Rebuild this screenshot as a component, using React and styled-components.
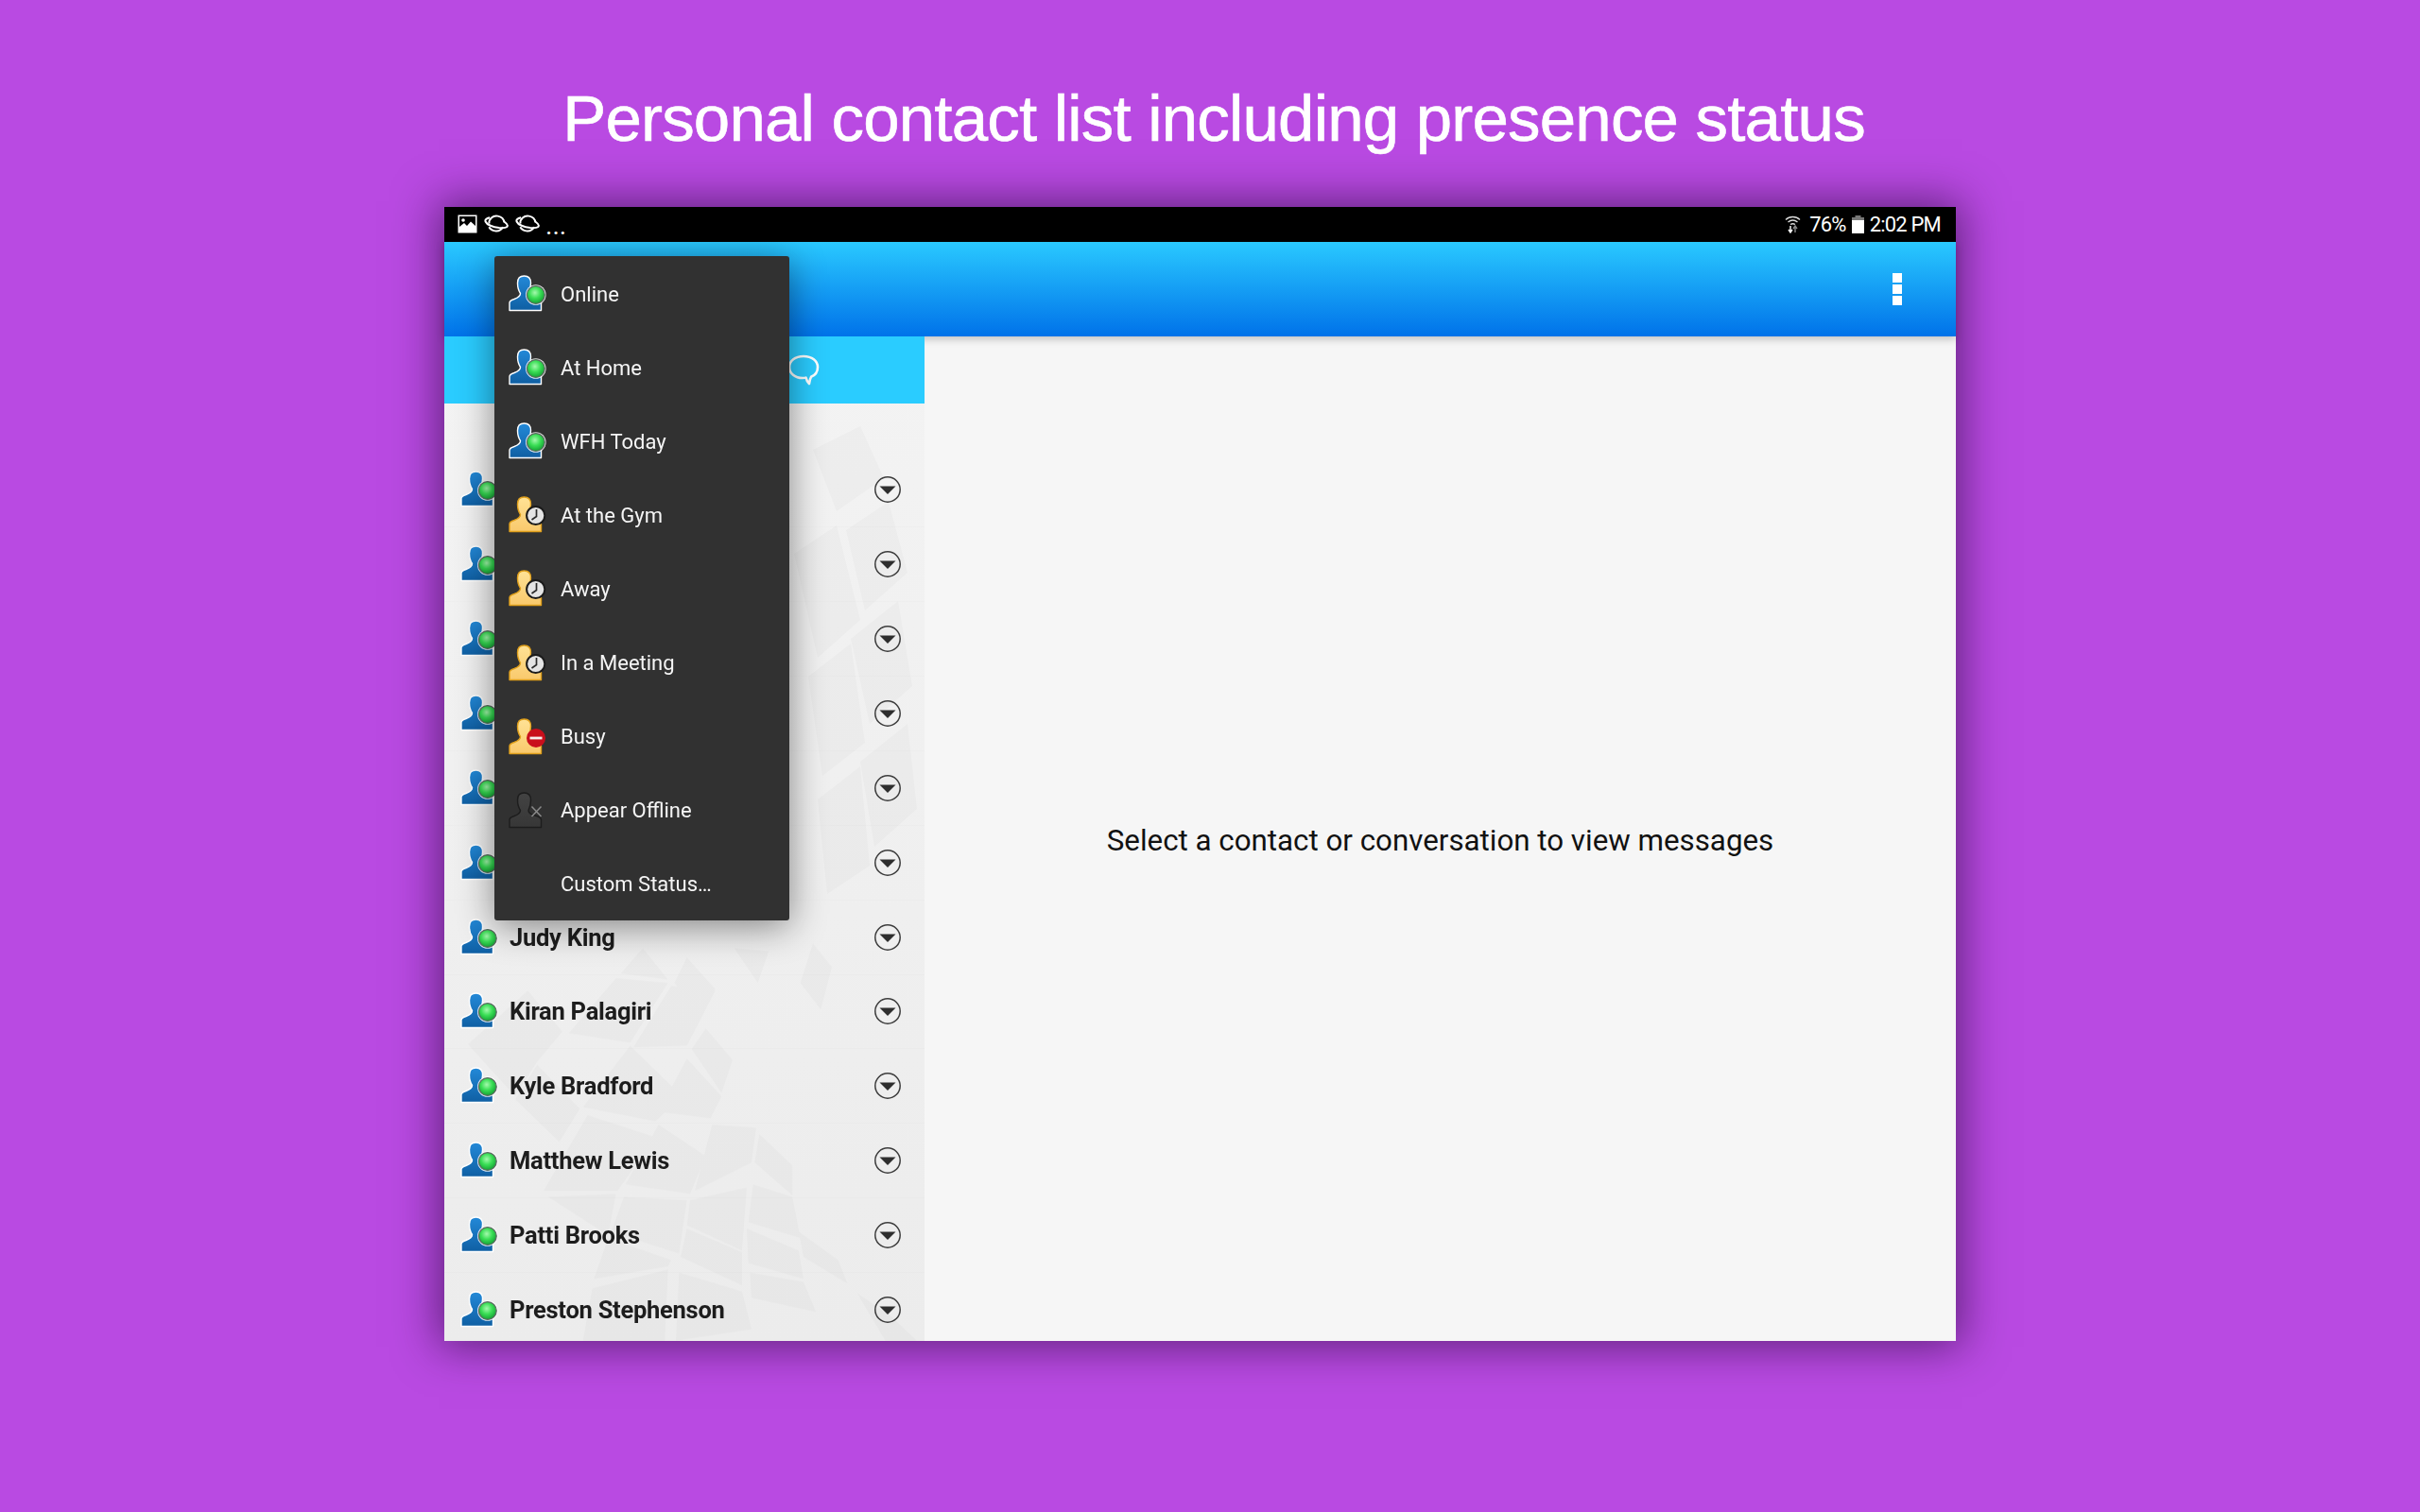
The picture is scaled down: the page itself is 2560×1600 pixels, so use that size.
import React from 'react'
import styled, { createGlobalStyle } from 'styled-components'

const GlobalStyle = createGlobalStyle`
  html, body { margin: 0; padding: 0; }
  body { background: #b94ae2; font-family: Roboto, "Liberation Sans", sans-serif; }
`

const Page = styled.div`
  width: 2560px;
  height: 1600px;
  overflow: hidden;
  background: #b94ae2;
`

const Title = styled.h1`
  height: 219px;
  margin: 0;
  padding: 89px 0 0 8px;
  box-sizing: border-box;
  text-align: center;
  color: #fff;
  font-family: "Liberation Sans", Arial, sans-serif;
  font-weight: 400;
  font-size: 69px;
  line-height: 74px;
  letter-spacing: -0.8px;
  -webkit-text-stroke: 0.6px #fff;
`

const Tablet = styled.div`
  position: relative;
  width: 1599px;
  height: 1200px;
  margin-left: 470px;
  display: flex;
  flex-direction: column;
  background: #f6f6f6;
  box-shadow: 0 0 44px 6px rgba(40, 10, 60, 0.62);
`

const StatusBar = styled.div`
  height: 37px;
  flex: none;
  box-sizing: border-box;
  padding: 0 16px 1px 14px;
  background: #000;
  color: #fff;
  display: flex;
  align-items: center;
  justify-content: space-between;
`

const StatusGroup = styled.div`
  display: flex;
  align-items: center;
  gap: ${p => p.$gap}px;
  font-size: 22px;
  letter-spacing: -0.8px;
`

const Dots = styled.span`
  margin: 3px 0 0 -1px;
  font-size: 28px;
  line-height: 28px;
  letter-spacing: 0;
`

const WifiSlot = styled.span`
  display: flex;
  margin-right: 3px;
`

const Header = styled.div`
  position: relative;
  z-index: 1;
  height: 100px;
  flex: none;
  display: flex;
  align-items: center;
  justify-content: flex-end;
  padding-right: 57px;
  background: linear-gradient(#2ac9ff, #0072e9);
  box-shadow: 0 3px 8px rgba(0, 0, 0, 0.22);
`

const Overflow = styled.div`
  display: flex;
  flex-direction: column;
  gap: 2px;
  span { width: 10px; height: 10px; background: #fff; }
`

const Body = styled.div`
  flex: 1;
  display: flex;
  min-height: 0;
`

const Sidebar = styled.div`
  position: relative;
  width: 508px;
  flex: none;
  display: flex;
  flex-direction: column;
  background: linear-gradient(#f3f3f3, #ececec);
  overflow: hidden;
`

const Tabs = styled.div`
  position: relative;
  z-index: 1;
  height: 71px;
  flex: none;
  display: flex;
  align-items: center;
  padding-left: 363px;
  background: #2accff;
`

const Backdrop = styled.svg`
  position: absolute;
  left: 0;
  top: 0;
`

const List = styled.div`
  position: relative;
  padding-top: 52.5px;
`

const Row = styled.div`
  height: 78.87px;
  box-sizing: border-box;
  display: flex;
  align-items: center;
  padding: 0 24.5px 0 17px;
  border-bottom: 1px solid rgba(0, 0, 0, 0.012);
`

const Name = styled.span`
  flex: 1;
  margin-left: 12px;
  font-size: 25.5px;
  font-weight: 700;
  letter-spacing: -0.26px;
  color: #1d1d1d;
`

const Pane = styled.div`
  flex: 1;
  display: flex;
  align-items: center;
  justify-content: center;
  padding-top: 4px;
  font-size: 31.3px;
  color: #111;
`

const Menu = styled.div`
  position: absolute;
  z-index: 2;
  left: 53px;
  top: 52px;
  width: 312px;
  height: 703px;
  background: #313131;
  border-radius: 3px;
  box-shadow: 0 6px 38px rgba(0, 0, 0, 0.46);
`

const MenuRow = styled.div`
  height: 78.1px;
  box-sizing: border-box;
  padding: 2px 0 0 15px;
  display: flex;
  align-items: center;
`

const MenuIconSlot = styled.div`
  width: 55px;
  height: 40px;
  flex: none;
`

const MenuLabel = styled.span`
  font-size: 22px;
  color: #f5f5f5;
`

const PALETTES = {
  blue: { top: '#2389d8', bottom: '#0f5fa3', line: '#fff' },
  yellow: { top: '#ffe295', bottom: '#f9c96c', line: '#e0a01c' },
  dark: { top: '#434343', bottom: '#373737', line: '#1d1d1d' },
}

function Person({ kind, id }) {
  const c = PALETTES[kind]
  return (
    <>
      <defs>
        <linearGradient id={id} x1="0" y1="0" x2="0" y2="1">
          <stop offset="0" stopColor={c.top} />
          <stop offset="1" stopColor={c.bottom} />
        </linearGradient>
      </defs>
      <path
        d="M1 37.5V29.5C1 27.5 3 26.5 6 25.5C10 24 12.5 22.5 12.5 19.5C10.5 16.5 9.5 13 9.5 8.5C9.5 3.5 12 1 16.5 1C21 1 23.5 3.5 23.5 8.5C23.5 13 22.5 16.5 21 19.5C21 22.5 24 24 28 25C32 26 34.5 27.5 34.5 29.5V37.5Z"
        fill={`url(#${id})`}
        stroke={c.line}
        strokeWidth="1.4"
        strokeLinejoin="round"
      />
    </>
  )
}

function GreenBadge({ id }) {
  return (
    <>
      <defs>
        <radialGradient id={id} cx="0.45" cy="0.38" r="0.62">
          <stop offset="0" stopColor="#a4f9ad" />
          <stop offset="0.5" stopColor="#3ade55" />
          <stop offset="1" stopColor="#14a034" />
        </radialGradient>
      </defs>
      <circle cx="28.8" cy="21" r="10.8" fill="#fff" opacity="0.85" />
      <circle cx="28.8" cy="21" r="9.4" fill={`url(#${id})`} stroke="#5e6a63" strokeWidth="1.3" />
    </>
  )
}

function ClockBadge() {
  return (
    <>
      <circle cx="28.7" cy="20.5" r="9.6" fill="#e4e4e4" stroke="#1b1b1b" strokeWidth="2" />
      <path d="M29.5 14V21.5L24.5 25" fill="none" stroke="#2a2a2a" strokeWidth="1.7" />
    </>
  )
}

function BusyBadge() {
  return (
    <>
      <circle cx="29" cy="21" r="10" fill="#c90f1c" />
      <rect x="22.5" y="19.6" width="13" height="2.8" fill="#f7eeee" />
    </>
  )
}

function StatusIcon({ status, id }) {
  return (
    <svg width="40" height="40" viewBox="0 0 40 40">
      {status === 'online' && (
        <>
          <Person kind="blue" id={`${id}-p`} />
          <GreenBadge id={`${id}-b`} />
        </>
      )}
      {status === 'away' && (
        <>
          <Person kind="yellow" id={`${id}-p`} />
          <ClockBadge />
        </>
      )}
      {status === 'busy' && (
        <>
          <Person kind="yellow" id={`${id}-p`} />
          <BusyBadge />
        </>
      )}
      {status === 'offline' && (
        <>
          <Person kind="dark" id={`${id}-p`} />
          <path d="M24.5 15.5L34.5 26M34.5 15.5L24.5 26" stroke="#8a8a8a" strokeWidth="1.5" />
        </>
      )}
    </svg>
  )
}

function Chevron() {
  return (
    <svg width="30" height="30" viewBox="0 0 30 30">
      <circle cx="15" cy="15" r="13.2" fill="none" stroke="#3c3c3c" strokeWidth="1.5" />
      <path d="M6.5 11.5H23.5L15 20Z" fill="#2e2e2e" />
    </svg>
  )
}

function Planet() {
  return (
    <svg width="26" height="22" viewBox="0 0 26 22" fill="none" stroke="#fff" strokeWidth="2">
      <g transform="rotate(10 13 11)">
        <path d="M5.5 12C4 7 8 2.5 13 2.5C17 2.5 20 4.5 21 8" />
        <path d="M20.5 13C19 17 16 18.5 13 18.5C10 18.5 7.5 17.5 6 15.5" />
        <path d="M5 5.5C1.5 7 0.3 8.8 1.3 10.5C3.3 13.5 10 15 16.5 14.5C21.5 14 25.5 12.8 25 10.6C24.7 9.6 23.5 8.3 21 7.3" />
      </g>
    </svg>
  )
}

function PictureIcon() {
  return (
    <svg width="21" height="20" viewBox="0 0 21 20">
      <rect x="0.5" y="0.5" width="20" height="19" fill="#fff" />
      <rect x="2" y="2" width="17" height="14" fill="#000" />
      <circle cx="6" cy="6" r="1.8" fill="#fff" />
      <path d="M2 16V13L7 9L10 12L14 7.5L19 12V16Z" fill="#fff" />
    </svg>
  )
}

function Wifi() {
  return (
    <svg width="17" height="20" viewBox="0 0 17 20" fill="none" stroke="#d8d8d8" strokeWidth="1.4">
      <path d="M1 5.5C5 1.5 12 1.5 16 5.5M3.5 8C6.5 5.5 10.5 5.5 13.5 8M6 10.5C7.5 9.5 9.5 9.5 11 10.5" />
      <path d="M6 12V18M4 16L6 19L8 16" stroke="#fff" />
      <path d="M11 19V13M9 15L11 12L13 15" stroke="#888" />
    </svg>
  )
}

function Battery() {
  return (
    <svg width="13" height="19" viewBox="0 0 13 19">
      <rect x="3.5" y="0" width="6" height="3" fill="#777" />
      <rect x="0" y="2" width="13" height="4" fill="#777" />
      <rect x="0" y="5" width="13" height="14" fill="#fff" />
    </svg>
  )
}

function Bubble() {
  return (
    <svg width="34" height="33" viewBox="0 0 34 33" fill="none" stroke="#fff" strokeWidth="2.6">
      <path d="M17 2C8 2 2 7 2 13.5C2 20 8 25 16 25C17.5 25 18.5 25 19.5 24.6C20 27 21 29 23 31C23.5 28 24 25.5 25 23.8C29.5 22 32 18 32 13.5C32 7 26 2 17 2Z" strokeLinejoin="round" />
    </svg>
  )
}

// wallpaper cells, traced from the reference
const LOWER_CELLS = [
  '75,435 265,265 375,395 295,490 225,600',
  '395,400 545,225 710,240 590,430',
  '600,445 720,250 860,265 770,440',
  '785,450 830,385 915,485 880,590',
  '225,610 295,500 430,640 365,745',
  '440,635 590,440 755,600 670,680',
  '680,650 770,480 880,600 845,670',
  '315,900 455,660 670,730 550,900',
  '575,880 680,690 830,790 780,910',
  '795,900 850,690 990,700 975,810',
  '1000,720 1105,820 1105,915 985,810',
  '330,920 545,910 520,1040 470,1010',
  '570,920 770,930 745,1100 530,1030',
  '780,930 960,890 945,1090 770,1010',
  '980,880 1105,920 1130,1050 965,1000',
  '475,1180 520,1050 720,1120 710,1140',
  '750,1110 770,1020 945,1095 945,1200',
  '965,1130 960,1020 1125,1090 1140,1180',
  '1125,1030 1250,1120 1280,1195 1140,1110',
  '440,1377 470,1210 710,1150 700,1377',
  '735,1377 745,1160 945,1220 975,1340',
  '970,1160 1140,1190 1180,1285 975,1240',
  '1310,1225 1420,1300 1500,1377 1400,1377',
  '920,130 1030,140 995,240',
  '1130,240 1170,115 1230,190 1195,325',
  '730,240 770,160 860,260 810,340',
  '560,210 630,130 710,230',
]

const UPPER_CELLS = [
  '390,120 440,95 465,150 415,185',
  '425,205 470,175 490,250 445,290',
  '370,230 415,200 440,300 395,340',
  '430,320 480,280 495,370 450,410',
  '385,360 430,325 445,430 400,465',
  '440,450 490,410 500,500 455,540',
  '395,490 440,455 450,560 405,590',
]

const CONTACTS = ['', '', '', '', '', '', 'Judy King', 'Kiran Palagiri', 'Kyle Bradford', 'Matthew Lewis', 'Patti Brooks', 'Preston Stephenson']

const STATUSES = [
  ['online', 'Online'], ['online', 'At Home'], ['online', 'WFH Today'],
  ['away', 'At the Gym'], ['away', 'Away'], ['away', 'In a Meeting'],
  ['busy', 'Busy'], ['offline', 'Appear Offline'], [null, 'Custom Status…'],
]

export default function App() {
  return (
    <Page>
      <GlobalStyle />
      <Title>Personal contact list including presence status</Title>
      <Tablet>
        <StatusBar>
          <StatusGroup $gap={7}>
            <PictureIcon />
            <Planet />
            <Planet />
            <Dots>...</Dots>
          </StatusGroup>
          <StatusGroup $gap={6}>
            <WifiSlot><Wifi /></WifiSlot>
            <span>76%</span>
            <Battery />
            <span>2:02 PM</span>
          </StatusGroup>
        </StatusBar>
        <Header>
          <Overflow><span /><span /><span /></Overflow>
        </Header>
        <Body>
          <Sidebar>
            <Tabs><Bubble /></Tabs>
            <Backdrop width="508" height="1063" viewBox="0 0 508 1063">
              <g fill="#000" opacity="0.022">
                {UPPER_CELLS.map(p => <polygon key={p} points={p} />)}
                <g transform="translate(0 604) scale(0.3333)">
                  {LOWER_CELLS.map(p => <polygon key={p} points={p} />)}
                </g>
              </g>
            </Backdrop>
            <List>
              {CONTACTS.map((name, i) => (
                <Row key={i}>
                  <StatusIcon status="online" id={`c${i}`} />
                  <Name>{name}</Name>
                  <Chevron />
                </Row>
              ))}
            </List>
          </Sidebar>
          <Pane>Select a contact or conversation to view messages</Pane>
        </Body>
        <Menu>
          {STATUSES.map(([status, label], i) => (
            <MenuRow key={label}>
              <MenuIconSlot>
                {status && <StatusIcon status={status} id={`m${i}`} />}
              </MenuIconSlot>
              <MenuLabel>{label}</MenuLabel>
            </MenuRow>
          ))}
        </Menu>
      </Tablet>
    </Page>
  )
}
